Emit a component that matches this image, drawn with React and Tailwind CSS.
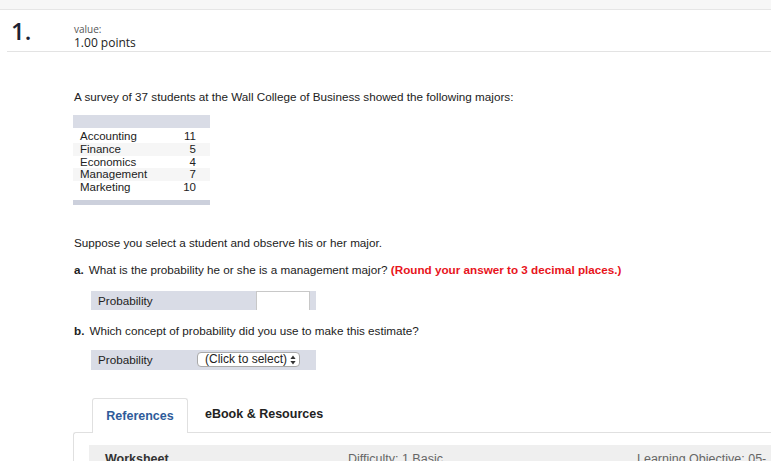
import React from 'react';

const majors = [
  ['Accounting', 11],
  ['Finance', 5],
  ['Economics', 4],
  ['Management', 7],
  ['Marketing', 10],
];

export default function App() {
  return (
    <div className="w-[771px] h-[461px] overflow-hidden bg-white text-[#222] font-['Liberation_Sans',Arial,sans-serif]">
      {/* top strip */}
      <div className="h-[10px] bg-[#f7f7f7] border-b border-[#e6e6e6]" />

      {/* question header */}
      <div className="ml-[7px] flex h-[42px] border-b border-[#e3e3e3] font-['Open_Sans',sans-serif]">
        <div className="w-[67px] pl-[4px] pt-[7px] text-[24px] leading-[28px] font-semibold text-[#1c2233]">1.</div>
        <div className="pt-[13px]">
          <div className="text-[10px] leading-[12px] text-[#555]">value:</div>
          <div className="text-[12px] leading-[16px] text-[#222]">1.00 points</div>
        </div>
      </div>

      <div className="pl-[74px] text-[11.7px]">
        <p className="mt-[37px] leading-[16px]">
          A survey of 37 students at the Wall College of Business showed the following majors:
        </p>

        {/* table */}
        <div className="mt-[10px] ml-[-1px] w-[137px] text-[11.5px] leading-[12.8px]">
          <div className="h-[13px] bg-[#d9dce6]" />
          <div className="mt-[2px]">
            {majors.map(([name, n], i) => (
              <div
                key={name}
                className={`flex justify-between pl-[7px] pr-[14px] ${i % 2 ? 'bg-[#f6f6f6]' : 'bg-white'}`}
              >
                <span>{name}</span>
                <span>{n}</span>
              </div>
            ))}
          </div>
          <div className="mt-[6px] h-[5px] bg-[#ccd0dc]" />
        </div>

        <p className="mt-[30px] leading-[16px]">Suppose you select a student and observe his or her major.</p>

        <p className="mt-[11px] leading-[16px]">
          <span className="font-bold">a.</span>
          <span className="ml-[5px]">What is the probability he or she is a management major?</span>{' '}
          <span className="font-bold text-[#e8141c]">(Round your answer to 3 decimal places.)</span>
        </p>

        {/* answer a */}
        <div className="mt-[13px] ml-[17px] flex h-[19px] w-[225px] items-center bg-[#d9dce6] text-[11.7px]">
          <span className="pl-[7px] w-[165px]">Probability</span>
          <div className="h-[19px] w-[54px] bg-white border border-[#c8c8c8] border-b-0" />
        </div>

        <p className="mt-[13px] leading-[16px]">
          <span className="font-bold">b.</span>
          <span className="ml-[5px]">Which concept of probability did you use to make this estimate?</span>
        </p>

        {/* answer b */}
        <div className="mt-[11px] ml-[17px] flex h-[20px] w-[225px] items-center bg-[#d9dce6] text-[11.7px]">
          <span className="pl-[7px] w-[106px]">Probability</span>
          <div className="flex h-[15px] w-[103px] items-center justify-between rounded-[4px] border border-[#a9a9a9] bg-white pl-[7px] pr-[3px] text-[12px] leading-[13px]">
            <span>(Click to select)</span>
            <svg width="6" height="10" viewBox="0 0 6 10">
              <path d="M3 0.5 L5.6 4 H0.4 Z" fill="#333" />
              <path d="M3 9.5 L5.6 6 H0.4 Z" fill="#333" />
            </svg>
          </div>
        </div>
      </div>

      {/* tabs */}
      <div className="mt-[27px] ml-[73px]">
        <div className="flex items-end">
          <div className="ml-[19px] flex h-[35px] w-[96px] items-center justify-center rounded-t-[3px] border border-b-0 border-[#e0e0e0] bg-white text-[12.5px] font-bold text-[#2e5b9a] relative top-[1px]">
            References
          </div>
          <div className="ml-[17px] flex h-[35px] items-center text-[12.5px] font-bold text-[#222]">
            eBook &amp; Resources
          </div>
        </div>
        <div className="border-t border-l border-[#e0e0e0] rounded-tl-[3px] pl-[15px] pt-[12px]">
          <div className="flex h-[40px] bg-[#efefef] pt-[5px] text-[12.5px]">
            <span className="pl-[16px] w-[259px] font-bold text-[#333]">Worksheet</span>
            <span className="w-[289px] text-[#666]">Difficulty: 1 Basic</span>
            <span className="whitespace-nowrap text-[#666]">Learning Objective: 05-</span>
          </div>
        </div>
      </div>
    </div>
  );
}
